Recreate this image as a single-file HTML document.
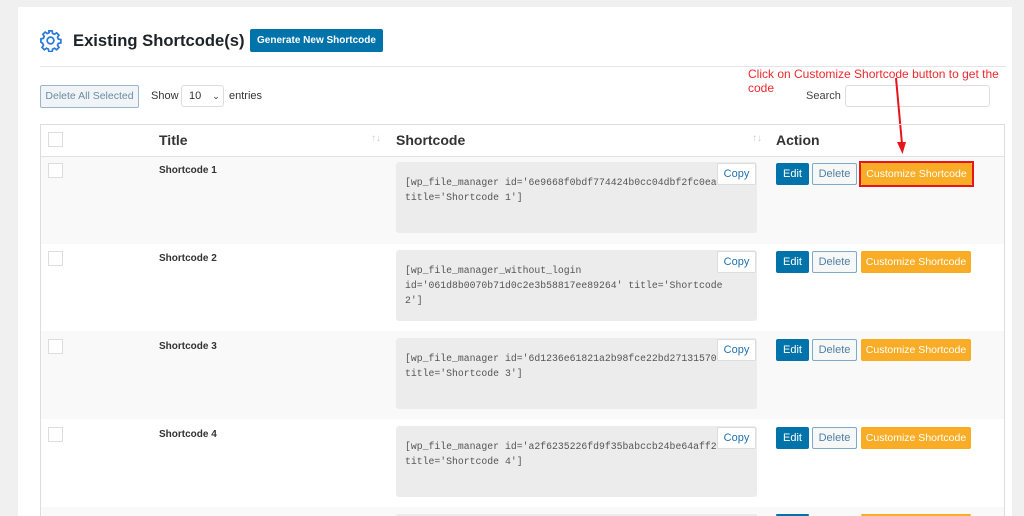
<!DOCTYPE html><html style="height:516px;overflow:hidden"><head><style>
body{margin:0;width:1024px;height:516px;background:#f0f0f1;font-family:"Liberation Sans",sans-serif;position:relative;overflow:hidden}
.a{position:absolute}
.panel{left:18px;top:7px;width:994px;height:509px;background:#fff}
.btn{position:absolute;font-size:11px;text-align:center;border-radius:2px;box-sizing:border-box;white-space:nowrap}
.blue{background:#0073aa;color:#fff}
.del{border:1px solid #7fa9c6;color:#4f7fa3;background:#f6f7f7}
.cust{background:#f9ac26;color:#fff;font-size:10.5px}
.copy{background:#fff;border:1px solid #ddd;color:#2271b1}
.code{position:absolute;left:396px;width:361px;height:71px;background:#ececec;border-radius:3px}
.code pre{margin:0;position:absolute;left:9px;top:13px;font-family:"Liberation Mono",monospace;font-size:9.8px;line-height:15px;color:#555}
.cb{position:absolute;left:48px;width:13px;height:13px;border:1px solid #ddd;background:#fff}
.t{position:absolute;left:159px;font-size:10px;font-weight:bold;color:#333}
</style></head><body>
<div class="a panel"></div>
<svg class="a" style="left:39px;top:29px" width="23" height="23" viewBox="0 0 24 24" fill="none" stroke="#2a7ad6" stroke-width="1.8"><path d="M10.3 2h3.4l.5 2.6 2 .9 2.2-1.5 2.4 2.4-1.5 2.2.9 2 2.6.5v3.4l-2.6.5-.9 2 1.5 2.2-2.4 2.4-2.2-1.5-2 .9-.5 2.6h-3.4l-.5-2.6-2-.9-2.2 1.5-2.4-2.4 1.5-2.2-.9-2L2 13.7v-3.4l2.6-.5.9-2L4 5.6 6.4 3.2l2.2 1.5 2-.9z"/><circle cx="12" cy="12" r="3.5"/></svg>
<div class="a" style="left:73px;top:31px;font-size:16.6px;font-weight:bold;color:#1d2327;white-space:nowrap">Existing Shortcode(s)</div>
<div class="btn blue" style="left:250px;top:29px;width:133px;height:23px;line-height:23px;font-weight:bold;font-size:10px">Generate New Shortcode</div>
<div class="a" style="left:40px;top:66px;width:966px;height:1px;background:#e5e5e5"></div>
<div class="btn" style="left:40px;top:85px;width:99px;height:23px;line-height:21px;border:1px solid #9ab6cc;background:#f0f4f7;color:#6a8aa5;font-size:10.5px">Delete All Selected</div>
<div class="a" style="left:151px;top:90px;font-size:11px;color:#333">Show</div>
<div class="a" style="left:181px;top:85px;width:43px;height:22px;border:1px solid #ddd;border-radius:3px;box-sizing:border-box;font-size:11px;line-height:20px;padding-left:7px;color:#333">10 <span style="margin-left:8px;font-size:9px">&#8964;</span></div>
<div class="a" style="left:229px;top:90px;font-size:11px;color:#333">entries</div>
<div class="a" style="left:748px;top:67px;font-size:12px;color:#f0282d;line-height:14px;width:262px">Click on Customize Shortcode button to get the code</div>
<div class="a" style="left:806px;top:90px;font-size:11px;color:#444">Search</div>
<div class="a" style="left:845px;top:85px;width:145px;height:22px;border:1px solid #ddd;border-radius:3px;box-sizing:border-box;background:#fff"></div>
<svg class="a" style="left:890px;top:78px" width="20" height="80"><line x1="6" y1="0" x2="12" y2="66" stroke="#e8141a" stroke-width="2"/><path d="M7 64l5.5 12 3.5-12z" fill="#e8141a"/></svg>
<div class="a" style="left:40px;top:124px;width:965px;height:392px;border:1px solid #ddd;border-bottom:0;box-sizing:border-box"></div>
<div class="a" style="left:41px;top:156px;width:963px;height:87px;background:#f9f9f9;border-top:1px solid #e2e2e2"></div>
<div class="a" style="left:41px;top:331px;width:963px;height:88px;background:#f9f9f9"></div>
<div class="a" style="left:41px;top:507px;width:963px;height:9px;background:#f9f9f9"></div>
<div class="cb" style="top:132px"></div>
<div class="a" style="left:159px;top:132px;font-size:14px;font-weight:bold;color:#333">Title</div>
<div class="a" style="left:371px;top:133px;font-size:10px;color:#ccc">&#8593;&#8595;</div>
<div class="a" style="left:396px;top:132px;font-size:14px;font-weight:bold;color:#333">Shortcode</div>
<div class="a" style="left:752px;top:133px;font-size:10px;color:#ccc">&#8593;&#8595;</div>
<div class="a" style="left:776px;top:132px;font-size:14px;font-weight:bold;color:#333">Action</div>

<div class="cb" style="top:163px"></div><div class="t" style="top:165px">Shortcode 1</div>
<div class="code" style="top:162px"><pre>[wp_file_manager id='6e9668f0bdf774424b0cc04dbf2fc0ea'
title='Shortcode 1']</pre></div>
<div class="cb" style="top:251px"></div><div class="t" style="top:253px">Shortcode 2</div>
<div class="code" style="top:250px"><pre>[wp_file_manager_without_login
id='061d8b0070b71d0c2e3b58817ee89264' title='Shortcode
2']</pre></div>
<div class="cb" style="top:339px"></div><div class="t" style="top:341px">Shortcode 3</div>
<div class="code" style="top:338px"><pre>[wp_file_manager id='6d1236e61821a2b98fce22bd27131570'
title='Shortcode 3']</pre></div>
<div class="cb" style="top:427px"></div><div class="t" style="top:429px">Shortcode 4</div>
<div class="code" style="top:426px"><pre>[wp_file_manager id='a2f6235226fd9f35babccb24be64aff2'
title='Shortcode 4']</pre></div>
<div class="code" style="top:514px;height:2px"></div>

<div class="btn copy" style="left:717px;top:163px;width:39px;height:22px;line-height:20px">Copy</div>
<div class="btn copy" style="left:717px;top:251px;width:39px;height:22px;line-height:20px">Copy</div>
<div class="btn copy" style="left:717px;top:339px;width:39px;height:22px;line-height:20px">Copy</div>
<div class="btn copy" style="left:717px;top:427px;width:39px;height:22px;line-height:20px">Copy</div>

<div class="btn blue" style="left:776px;top:163px;width:33px;height:22px;line-height:22px">Edit</div>
<div class="btn del" style="left:812px;top:163px;width:45px;height:22px;line-height:20px">Delete</div>
<div class="a" style="left:859px;top:161px;width:115px;height:26px;border:2px solid #e8141a;box-sizing:border-box"></div>
<div class="btn cust" style="left:861px;top:163px;width:111px;height:22px;line-height:22px">Customize Shortcode</div>
<div class="btn blue" style="left:776px;top:251px;width:33px;height:22px;line-height:22px">Edit</div>
<div class="btn del" style="left:812px;top:251px;width:45px;height:22px;line-height:20px">Delete</div>
<div class="btn cust" style="left:861px;top:251px;width:110px;height:22px;line-height:22px">Customize Shortcode</div>
<div class="btn blue" style="left:776px;top:339px;width:33px;height:22px;line-height:22px">Edit</div>
<div class="btn del" style="left:812px;top:339px;width:45px;height:22px;line-height:20px">Delete</div>
<div class="btn cust" style="left:861px;top:339px;width:110px;height:22px;line-height:22px">Customize Shortcode</div>
<div class="btn blue" style="left:776px;top:427px;width:33px;height:22px;line-height:22px">Edit</div>
<div class="btn del" style="left:812px;top:427px;width:45px;height:22px;line-height:20px">Delete</div>
<div class="btn cust" style="left:861px;top:427px;width:110px;height:22px;line-height:22px">Customize Shortcode</div>
<div class="btn blue" style="left:776px;top:514px;width:33px;height:2px"></div>
<div class="btn cust" style="left:861px;top:514px;width:110px;height:2px"></div>
</body></html>
